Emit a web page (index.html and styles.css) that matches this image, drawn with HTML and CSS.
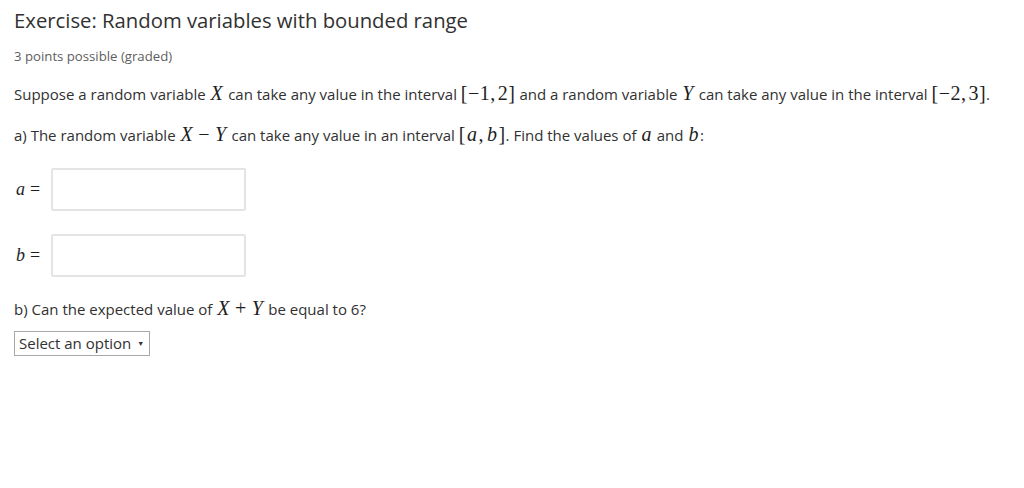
FILE: index.html
```html
<!DOCTYPE html>
<html>
<head>
<meta charset="utf-8">
<link rel="stylesheet" href="styles.css">
</head>
<body>
<div class="problem">
  <h3 class="title">Exercise: Random variables with bounded range</h3>
  <div class="meta">3 points possible (graded)</div>
  <p class="para">Suppose a random variable <span class="m"><i>X</i></span> can take any value in the interval <span class="m">[−1,<span class="th"></span>2]</span> and a random variable <span class="m"><i>Y</i></span> can take any value in the interval <span class="m">[−2,<span class="th"></span>3]</span>.</p>
  <p class="para">a) The random variable <span class="m"><i>X</i><span class="op">−</span><i>Y</i></span> can take any value in an interval <span class="m">[<i>a</i>,<span class="th"></span><i>b</i>]</span>. Find the values of <span class="m"><i>a</i></span> and <span class="m"><i>b</i></span>:</p>
  <div class="field">
    <span class="lbl"><i>a</i><span class="eq">=</span></span>
    <input class="box" type="text">
  </div>
  <div class="field">
    <span class="lbl"><i>b</i><span class="eq">=</span></span>
    <input class="box" type="text">
  </div>
  <p class="para q2">b) Can the expected value of <span class="m"><i>X</i><span class="op">+</span><i>Y</i></span> be equal to 6?</p>
  <div class="select">Select an option <span class="caret">▼</span></div>
</div>
</body>
</html>
```
FILE: styles.css
```css
html, body {
  margin: 0;
  padding: 0;
  background: #fff;
}
body {
  font-family: "Open Sans", sans-serif;
  color: #313131;
}
.problem {
  padding: 7px 14px;
}
.title {
  margin: 0;
  font-size: 20.3px;
  font-weight: 400;
  line-height: 27px;
  color: #313131;
}
.meta {
  margin-top: 14px;
  font-size: 13.2px;
  line-height: 16px;
  color: #5e5e5e;
}
.para {
  margin: 20px 0 0 0;
  font-size: 15px;
  line-height: 20px;
}
.para + .para {
  margin-top: 21px;
}
.m {
  font-family: "Liberation Serif", "DejaVu Serif", serif;
  font-size: 20px;
  line-height: 18px;
  letter-spacing: 0.5px;
  color: #1e1e1e;
}
.m i {
  font-style: italic;
  margin: 0 1px;
}
.th {
  display: inline-block;
  width: 2px;
}
.op {
  display: inline-block;
  padding: 0 4px;
}
.field {
  display: flex;
  align-items: center;
  gap: 7px;
  margin-top: 23px;
}
.field + .field {
  margin-top: 23px;
}
.lbl {
  flex-shrink: 0;
  width: 30px;
  white-space: nowrap;
  font-family: "Liberation Serif", "DejaVu Serif", serif;
  font-size: 18px;
  color: #1e1e1e;
}
.lbl i {
  font-style: italic;
  margin-left: 2px;
}
.eq {
  margin-left: 5px;
}
.box {
  width: 195px;
  height: 43px;
  box-sizing: border-box;
  border: 2px solid #e4e4e4;
  border-radius: 2px;
  background: #fff;
  margin: 0;
  padding: 0;
}
.q2 {
  margin-top: 22px;
}
.select {
  display: inline-block;
  margin-top: 12px;
  border: 1px solid #a8a8a8;
  padding: 2px 5px 2px 4px;
  font-size: 15px;
  line-height: 19px;
  color: #313131;
}
.caret {
  font-size: 7px;
  vertical-align: 3px;
  margin-left: 2px;
}
```
